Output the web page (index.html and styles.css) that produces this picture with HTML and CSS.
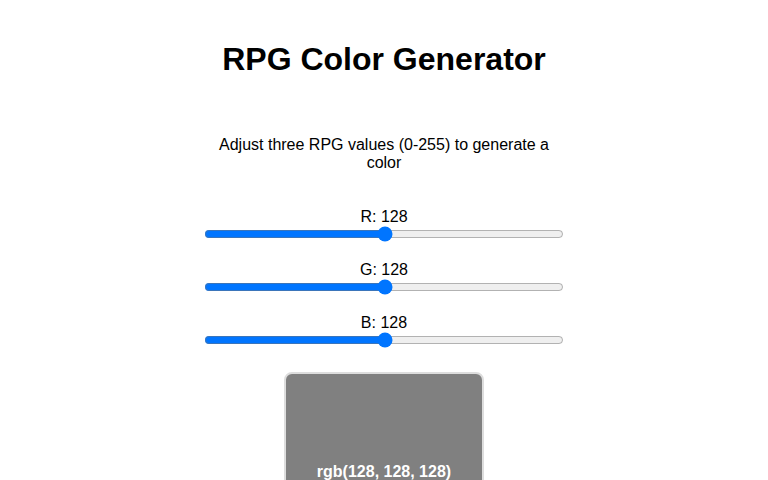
FILE: index.html
```html
<!DOCTYPE html>
<html>
<head>
  <meta charset="UTF-8">
  <title>RPG Color Generator</title>
  <meta name="viewport" content="width=device-width, initial-scale=1.0">
  <link rel="stylesheet" href="styles.css">
</head>
<body>
<div class="container">
  <h1>RPG Color Generator</h1>
  <p class="intro">Adjust three RPG values (0-255) to generate a color</p>

  <div class="slider-group">
    <label for="red">R: <span id="redValue">128</span></label>
    <input type="range" id="red" min="0" max="255" value="128" oninput="updateColor()">
  </div>
  <div class="slider-group">
    <label for="green">G: <span id="greenValue">128</span></label>
    <input type="range" id="green" min="0" max="255" value="128" oninput="updateColor()">
  </div>
  <div class="slider-group">
    <label for="blue">B: <span id="blueValue">128</span></label>
    <input type="range" id="blue" min="0" max="255" value="128" oninput="updateColor()">
  </div>

  <div class="color-box" id="colorBox">
    <span id="colorText">rgb(128, 128, 128)</span>
  </div>
</div>

<script>
  function updateColor() {
    const r = document.getElementById("red").value;
    const g = document.getElementById("green").value;
    const b = document.getElementById("blue").value;
    document.getElementById("redValue").textContent = r;
    document.getElementById("greenValue").textContent = g;
    document.getElementById("blueValue").textContent = b;
    const color = `rgb(${r}, ${g}, ${b})`;
    document.getElementById("colorBox").style.backgroundColor = color;
    document.getElementById("colorText").textContent = color;
  }

  updateColor();
</script>
</body>
</html>
```

FILE: styles.css
```css
body {
  font-family: "Liberation Sans", Arial, sans-serif;
  background-color: #fff;
  margin: 0;
  padding: 0;
  text-align: center;
  color: #000;
}

.container {
  width: 360px;
  margin: 0 auto;
  padding-top: 20px;
}

h1 {
  font-size: 32px;
  margin: 21px 0 58px;
}

.intro {
  font-size: 16px;
  margin: 0 0 36px;
}

.slider-group {
  margin-bottom: 15px;
}

.slider-group label {
  display: block;
  font-size: 16px;
}

.slider-group input[type="range"] {
  width: 360px;
  margin: 0;
}

.color-box {
  width: 200px;
  height: 200px;
  margin: 20px auto 0;
  background-color: rgb(128, 128, 128);
  border: 2px solid #ddd;
  border-radius: 8px;
  display: flex;
  align-items: center;
  justify-content: center;
  color: white;
  font-weight: bold;
  font-size: 16px;
  box-sizing: border-box;
}
```
